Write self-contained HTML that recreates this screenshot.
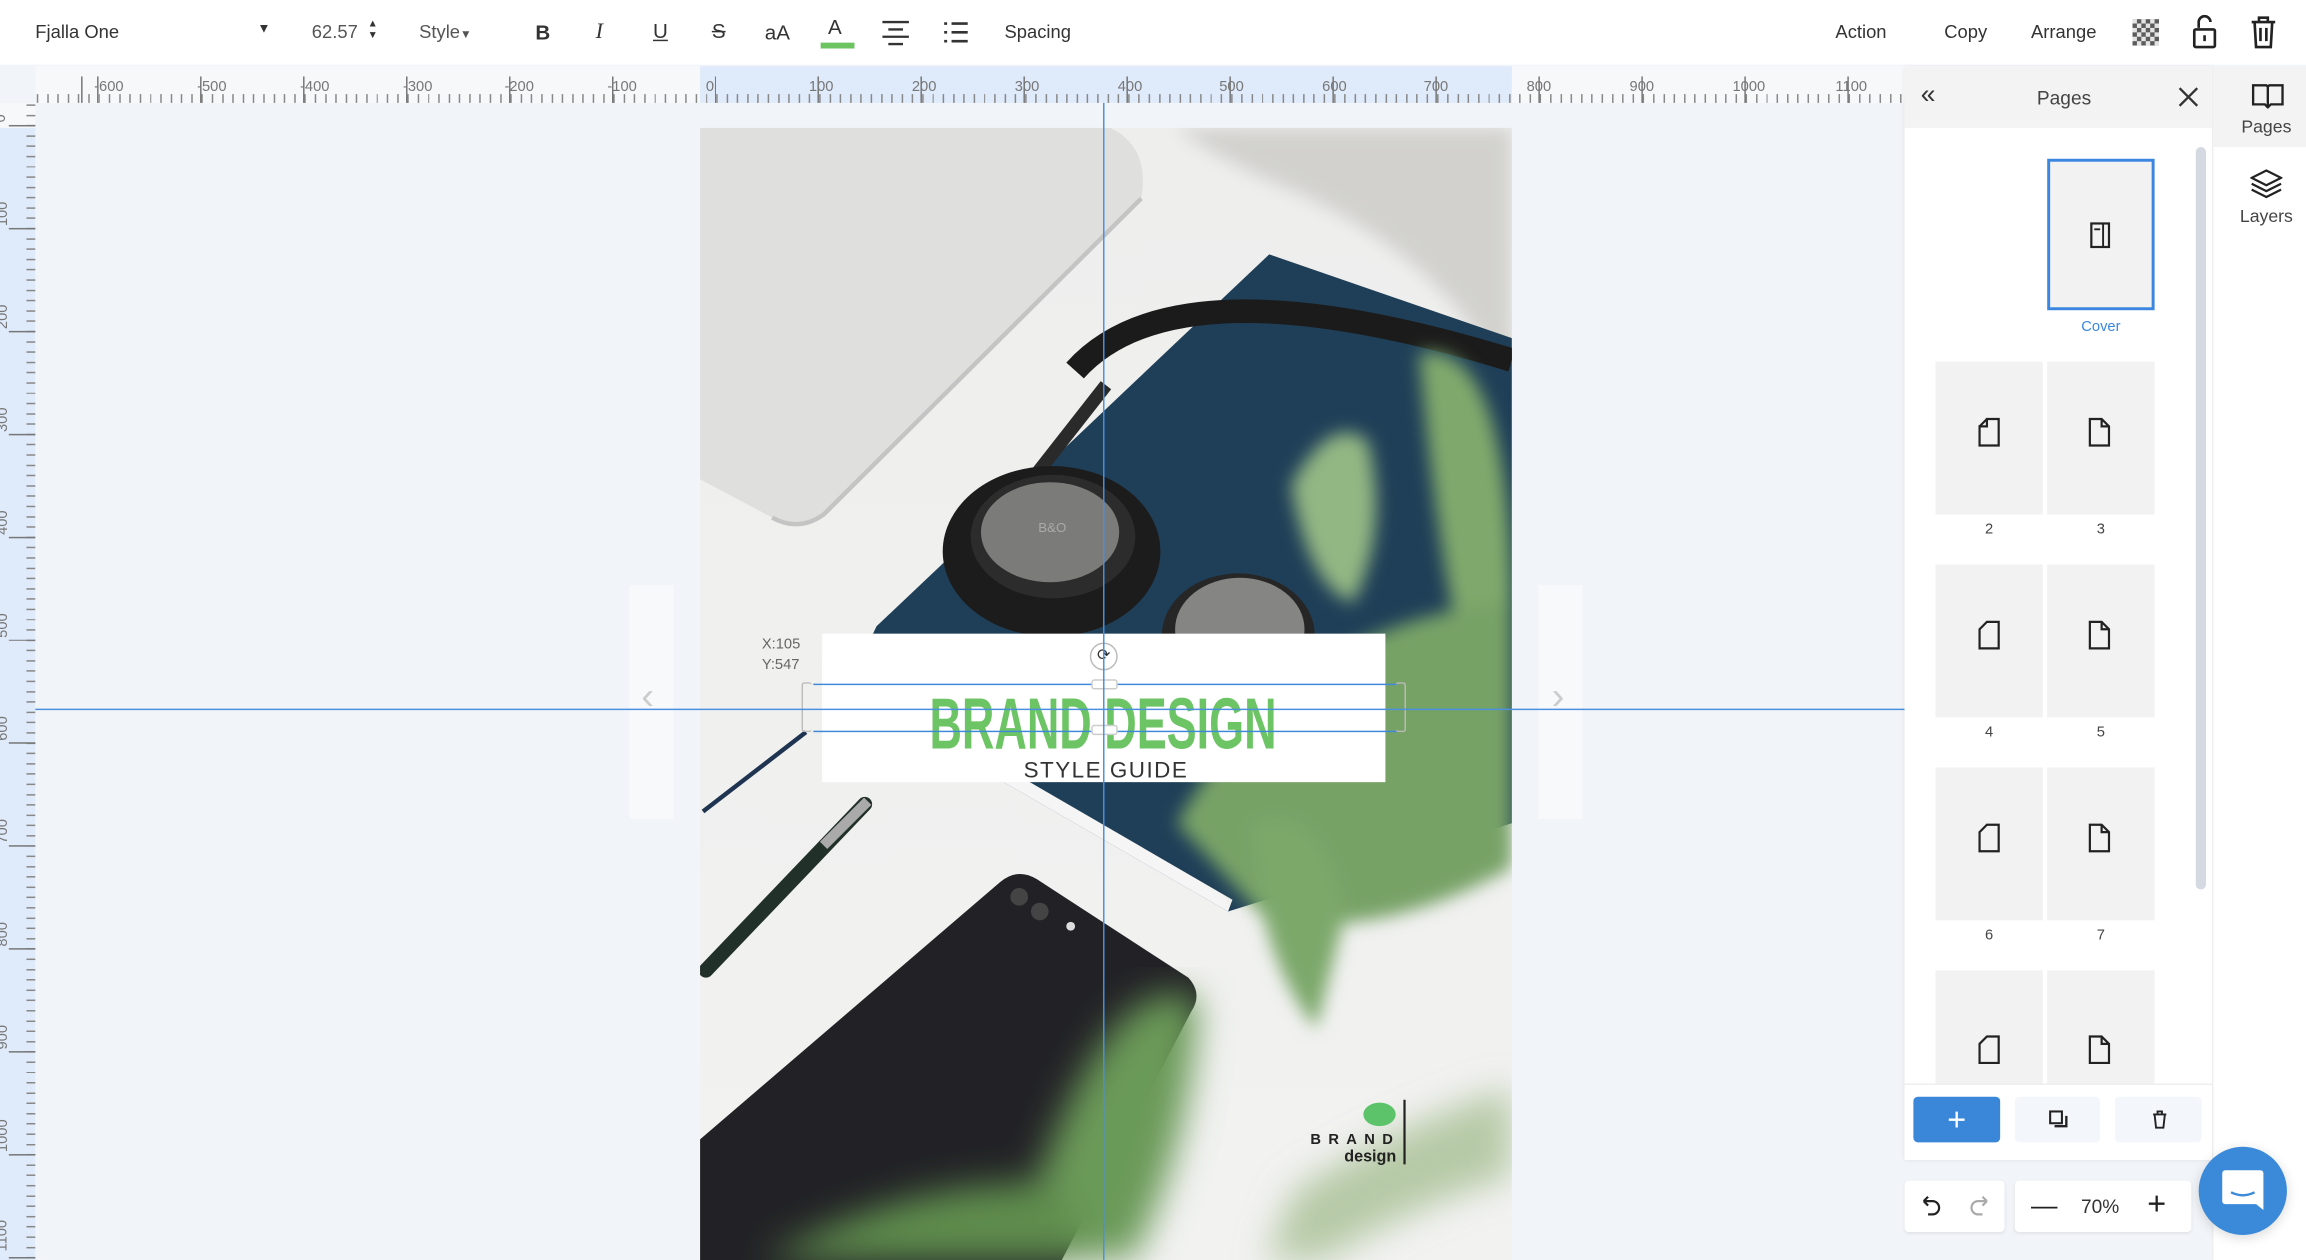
<!DOCTYPE html>
<html><head><meta charset="utf-8">
<style>
html,body{margin:0;padding:0;width:2306px;height:1260px;overflow:hidden;background:#f1f4f8;font-family:"Liberation Sans",sans-serif;}
#w{position:absolute;left:0;top:0;width:1568px;height:857px;transform:scale(1.4707,1.4702);transform-origin:0 0;background:#f1f4f8;overflow:hidden}
.a{position:absolute}
.tb{font-size:12.5px;color:#333;}
.thumb{position:absolute;width:73px;height:104px;background:#f2f2f2}
.lbl{position:absolute;font-size:10px;color:#444;width:73px;text-align:center}
</style></head><body><div id="w">
<!-- toolbar -->
<div class="a" style="left:0;top:0;width:1568px;height:44px;background:#fff"></div>
<div class="a tb" style="left:24px;top:15px">Fjalla One</div>
<div class="a tb" style="left:175px;top:14px;font-size:9px">▼</div>
<div class="a tb" style="left:212px;top:15px;color:#555">62.57</div>
<div class="a tb" style="left:250px;top:13px;font-size:7px;line-height:8px">▲<br>▼</div>
<div class="a tb" style="left:285px;top:15px;color:#555">Style<span style="font-size:8px">▼</span></div>
<div class="a tb" style="left:364px;top:14px;font-weight:bold;font-size:14px">B</div>
<div class="a tb" style="left:405px;top:14px;font-style:italic;font-family:'Liberation Serif',serif;font-size:15px">I</div>
<div class="a tb" style="left:444px;top:13px;text-decoration:underline;font-size:14px">U</div>
<div class="a tb" style="left:484px;top:13px;text-decoration:line-through;font-size:14px">S</div>
<div class="a tb" style="left:520px;top:14px;font-size:14px">aA</div>
<div class="a tb" style="left:563px;top:10px;font-size:14px">A</div>
<div class="a" style="left:558px;top:29px;width:23px;height:4px;background:#6cc461"></div>
<svg class="a" style="left:599px;top:13px" width="20" height="18"><path d="M1 2h18M5 7h10M1 12h18M5 17h10" stroke="#333" stroke-width="1.6"/></svg>
<svg class="a" style="left:641px;top:14px" width="18" height="16"><path d="M1 2h2M1 8h2M1 14h2M6 2h11M6 8h11M6 14h11" stroke="#333" stroke-width="1.8"/></svg>
<div class="a tb" style="left:683px;top:15px">Spacing</div>
<div class="a tb" style="left:1248px;top:15px">Action</div>
<div class="a tb" style="left:1322px;top:15px">Copy</div>
<div class="a tb" style="left:1381px;top:15px">Arrange</div>
<div class="a" style="left:1450px;top:13px;width:18px;height:18px;background:repeating-conic-gradient(#333 0 25%,#ddd 0 50%) 0 0/6px 6px;opacity:.8"></div>
<svg class="a" style="left:1490px;top:10px" width="18" height="24"><path d="M5 9V5a4 4 0 0 1 8 0" fill="none" stroke="#222" stroke-width="1.8"/><rect x="2" y="10" width="14" height="12" rx="1" fill="none" stroke="#222" stroke-width="1.8"/><path d="M9 14v4" stroke="#222" stroke-width="1.8"/></svg>
<svg class="a" style="left:1530px;top:10px" width="18" height="24"><path d="M1 5h16M6 5V2h6v3M3 5l1 17h10l1-17M7 9v9M11 9v9" fill="none" stroke="#222" stroke-width="1.8"/></svg>

<!-- horizontal ruler -->
<div class="a" style="left:24px;top:45px;width:1271px;height:25px;background:#f7f8fa"></div>
<div class="a" style="left:476px;top:45px;width:552px;height:25px;background:#dfeafa"></div>
<div class="a" style="left:24px;top:64px;width:1271px;height:6px;background:repeating-linear-gradient(90deg,#888 0 1px,transparent 1px 7px);background-position:1px 0"></div>
<div class="a" style="left:24px;top:52px;width:1271px;height:18px;background:repeating-linear-gradient(90deg,#777 0 1px,transparent 1px 70px);background-position:42px 0"></div>
<div class="a" style="left:0;top:54px;width:1295px;height:12px;font-size:10px;color:#777">
<span class="a" style="left:64px">-600</span><span class="a" style="left:134px">-500</span><span class="a" style="left:204px">-400</span><span class="a" style="left:274px">-300</span><span class="a" style="left:343px">-200</span><span class="a" style="left:413px">-100</span><span class="a" style="left:480px">0</span><span class="a" style="left:550px">100</span><span class="a" style="left:620px">200</span><span class="a" style="left:690px">300</span><span class="a" style="left:760px">400</span><span class="a" style="left:829px">500</span><span class="a" style="left:899px">600</span><span class="a" style="left:968px">700</span><span class="a" style="left:1038px">800</span><span class="a" style="left:1108px">900</span><span class="a" style="left:1178px">1000</span><span class="a" style="left:1248px">1100</span></div>
<!-- vertical ruler -->
<div class="a" style="left:0;top:70px;width:24px;height:787px;background:#f7f8fa"></div>
<div class="a" style="left:0;top:87px;width:24px;height:770px;background:#dfeafa"></div>
<div class="a" style="left:18px;top:70px;width:6px;height:787px;background:repeating-linear-gradient(180deg,#888 0 1px,transparent 1px 7px);background-position:0 1px"></div>
<div class="a" style="left:6px;top:70px;width:18px;height:787px;background:repeating-linear-gradient(180deg,#777 0 1px,transparent 1px 70px);background-position:0 15px"></div>
<div class="a" style="left:0;top:0;font-size:10px;color:#777">
<span class="a" style="left:-2px;top:75px;transform:rotate(-90deg)">0</span><span class="a" style="left:-6px;top:140px;transform:rotate(-90deg)">100</span><span class="a" style="left:-6px;top:210px;transform:rotate(-90deg)">200</span><span class="a" style="left:-6px;top:280px;transform:rotate(-90deg)">300</span><span class="a" style="left:-6px;top:350px;transform:rotate(-90deg)">400</span><span class="a" style="left:-6px;top:420px;transform:rotate(-90deg)">500</span><span class="a" style="left:-6px;top:490px;transform:rotate(-90deg)">600</span><span class="a" style="left:-6px;top:560px;transform:rotate(-90deg)">700</span><span class="a" style="left:-6px;top:630px;transform:rotate(-90deg)">800</span><span class="a" style="left:-6px;top:700px;transform:rotate(-90deg)">900</span><span class="a" style="left:-9px;top:767px;transform:rotate(-90deg)">1000</span><span class="a" style="left:-9px;top:835px;transform:rotate(-90deg)">1100</span></div>

<!-- side arrow panels -->
<div class="a" style="left:428px;top:398px;width:30px;height:159px;background:#f8f9fb"></div>
<div class="a" style="left:436px;top:458px;font-size:26px;color:#ccc">‹</div>
<div class="a" style="left:1046px;top:398px;width:30px;height:159px;background:#f8f9fb"></div>
<div class="a" style="left:1055px;top:458px;font-size:26px;color:#ccc">›</div>

<!-- photo page -->
<svg class="a" style="left:476px;top:87px" width="552" height="770" viewBox="476 87 552 770">
<defs><filter id="b"><feGaussianBlur stdDeviation="6"/></filter><filter id="b3"><feGaussianBlur stdDeviation="12"/></filter>
<linearGradient id="bg" x1="0" y1="0" x2="0" y2="1"><stop offset="0" stop-color="#eeeeed"/><stop offset="1" stop-color="#f2f2f1"/></linearGradient></defs>
<rect x="476" y="87" width="552" height="770" fill="url(#bg)"/>
<path d="M800 87H1028V270Q990 180 880 130Q830 110 800 87Z" fill="#d2d1ce" filter="url(#b)"/>
<path d="M476 87H755Q782 100 776 135L560 350Q543 362 525 352L476 326Z" fill="#dfdfde"/>
<path d="M776 135L560 350Q543 362 525 352" fill="none" stroke="#c4c4c4" stroke-width="3"/>
<path d="M863 173L1028 230V560L835 620L575 470L596 426Z" fill="#1f3f58"/>
<path d="M575 470L835 620L838 612L590 468Z" fill="#f5f5f5"/>
<path d="M731 252Q800 175 1028 245" fill="none" stroke="#1b1b1b" stroke-width="16"/>
<path d="M752 262L705 322" stroke="#2a2a2a" stroke-width="9"/>
<ellipse cx="715" cy="375" rx="74" ry="58" fill="#1c1c1c"/>
<ellipse cx="716" cy="365" rx="56" ry="42" fill="#2c2c2c"/>
<ellipse cx="714" cy="362" rx="47" ry="34" fill="#7b7b7a"/>
<text x="706" y="362" font-size="9" fill="#aaa" font-family="Liberation Sans">B&amp;O</text>
<ellipse cx="842" cy="432" rx="52" ry="42" fill="#262626"/>
<ellipse cx="843" cy="428" rx="44" ry="35" fill="#858584"/>
<path d="M478 552L548 498" stroke="#1e3450" stroke-width="3"/>
<path d="M480 660L588 547" stroke="#22302a" stroke-width="10" stroke-linecap="round"/>
<path d="M560 575L590 545" stroke="#aaa" stroke-width="7"/>
<path d="M680 600Q692 590 705 598L808 665Q818 676 810 688L722 857H476V775Z" fill="#222226"/>
<circle cx="693" cy="610" r="6" fill="#444"/><circle cx="707" cy="620" r="6" fill="#444"/><circle cx="728" cy="630" r="3" fill="#ddd"/>
<g filter="url(#b)">
<path d="M878 330Q905 280 930 300Q945 360 920 410Q890 400 878 330Z" fill="#93b783"/>
<path d="M965 240Q1028 230 1028 420V540Q985 470 965 240Z" fill="#7fa96c"/>
<path d="M800 560Q880 420 1028 410V590Q940 640 860 625Z" fill="#77a266"/>
<path d="M850 560Q900 540 915 620L895 700Q855 650 850 560Z" fill="#7ba86a"/>
</g>
<g filter="url(#b3)">
<path d="M690 850Q750 650 815 680Q810 780 770 857Z" fill="#6a9a58"/>
<path d="M520 857Q620 800 720 805L740 857Z" fill="#5f8d4e"/>
<path d="M880 810Q960 760 1028 740V800Q960 820 900 857H860Z" fill="#9cb886" opacity=".7"/>
</g>
<ellipse cx="938" cy="758" rx="11" ry="8" fill="#5cc36a"/>
<path d="M955 748V792" stroke="#222" stroke-width="1.5"/>
<text x="891" y="778" font-size="10" font-weight="bold" letter-spacing="5" fill="#222" font-family="Liberation Sans">BRAND</text>
<text x="914" y="790" font-size="11" font-weight="bold" fill="#222" font-family="Liberation Sans">design</text>
</svg>

<!-- text box -->
<div class="a" style="left:559px;top:431px;width:383px;height:101px;background:#fff"></div>
<svg class="a" style="left:559px;top:431px" width="383" height="101">
<text x="73" y="78" textLength="236" lengthAdjust="spacingAndGlyphs" font-family="Liberation Sans Narrow, Liberation Sans" font-weight="bold" font-size="49" fill="#6cc464">BRAND DESIGN</text>
<text x="137" y="98" textLength="112" lengthAdjust="spacingAndGlyphs" font-family="Liberation Sans" font-size="15" letter-spacing="1" fill="#333">STYLE GUIDE</text>
</svg>
<div class="a" style="left:518px;top:432px;font-size:10px;color:#666;line-height:14px">X:105<br>Y:547</div>
<!-- selection -->
<div class="a" style="left:553px;top:465px;width:397px;height:31px;border-top:1.5px solid #3f87d8;border-bottom:1.5px solid #3f87d8"></div>
<div class="a" style="left:545px;top:464px;width:6px;height:32px;border:1.5px solid #bbb;border-right:none;border-radius:2px;background:transparent"></div>
<div class="a" style="left:949px;top:464px;width:6px;height:32px;border:1.5px solid #bbb;border-left:none;border-radius:2px"></div>
<div class="a" style="left:742px;top:462px;width:16px;height:5px;background:#fff;border:1px solid #ccc;border-radius:2px"></div>
<div class="a" style="left:742px;top:493px;width:16px;height:5px;background:#fff;border:1px solid #ccc;border-radius:2px"></div>
<div class="a" style="left:741px;top:437px;width:17px;height:17px;border-radius:50%;background:#fff;border:1px solid #bbb;font-size:11px;text-align:center;line-height:17px;color:#333">⟳</div>
<!-- guides -->
<div class="a" style="left:750px;top:70px;width:1px;height:787px;background:#4a8fe0"></div>
<div class="a" style="left:24px;top:482px;width:1271px;height:1px;background:#4a8fe0"></div>

<!-- right panel -->
<div class="a" style="left:1295px;top:45px;width:209px;height:743px;background:#fff;box-shadow:0 1px 3px rgba(0,0,0,.08)"></div>
<div class="a" style="left:1295px;top:45px;width:209px;height:42px;background:#f3f3f3"></div>
<div class="a" style="left:1306px;top:54px;font-size:18px;color:#333">«</div>
<div class="a" style="left:1385px;top:59px;font-size:13px;color:#444">Pages</div>
<svg class="a" style="left:1481px;top:59px" width="14" height="14"><path d="M1 1L13 13M13 1L1 13" stroke="#333" stroke-width="1.6"/></svg>
<div class="a" style="left:1493px;top:100px;width:7px;height:505px;background:#d5d9e1;border-radius:4px"></div>
<div class="thumb" style="left:1392px;top:108px;width:69px;height:99px;border:2px solid #3b86e0"></div>
<svg class="a" style="left:1421px;top:151px" width="14" height="18"><rect x="1" y="1" width="12" height="16" fill="none" stroke="#222" stroke-width="1.5"/><path d="M9 1V17M3 5h4" stroke="#222" stroke-width="1.3"/></svg>
<div class="lbl" style="left:1392px;top:217px;color:#3b86e0">Cover</div>
<div class="thumb" style="left:1316px;top:246px"></div><div class="thumb" style="left:1392px;top:246px"></div>
<div class="thumb" style="left:1316px;top:384px"></div><div class="thumb" style="left:1392px;top:384px"></div>
<div class="thumb" style="left:1316px;top:522px"></div><div class="thumb" style="left:1392px;top:522px"></div>
<div class="thumb" style="left:1316px;top:660px;height:77px"></div><div class="thumb" style="left:1392px;top:660px;height:77px"></div>
<svg class="a" style="left:1316px;top:246px" width="150" height="490">
<g fill="none" stroke="#222" stroke-width="1.5">
<path d="M30 44h5v-5h8v18h-13z M30 44l5-5"/>
<path d="M105 39h8l5 5v13h-13z M113 39v5h5"/>
<path d="M30 182l5-5h8v18h-13z"/><path d="M105 177h8l5 5v13h-13z M113 177v5h5"/>
<path d="M30 320l5-5h8v18h-13z"/><path d="M105 315h8l5 5v13h-13z M113 315v5h5"/>
<path d="M30 464l5-5h8v18h-13z"/><path d="M105 459h8l5 5v13h-13z M113 459v5h5"/>
</g></svg>
<div class="lbl" style="left:1316px;top:355px">2</div><div class="lbl" style="left:1392px;top:355px">3</div>
<div class="lbl" style="left:1316px;top:493px">4</div><div class="lbl" style="left:1392px;top:493px">5</div>
<div class="lbl" style="left:1316px;top:631px">6</div><div class="lbl" style="left:1392px;top:631px">7</div>
<div class="a" style="left:1295px;top:737px;width:209px;height:51px;background:#fff;border-top:1px solid #eee"></div>
<div class="a" style="left:1301px;top:746px;width:59px;height:31px;background:#3a87d9;border-radius:3px;color:#fff;font-size:22px;text-align:center;line-height:31px">+</div>
<div class="a" style="left:1370px;top:746px;width:58px;height:31px;background:#f3f7fc;border-radius:3px"></div>
<svg class="a" style="left:1393px;top:755px" width="13" height="13"><rect x="1" y="1" width="8" height="8" fill="none" stroke="#222" stroke-width="1.4"/><path d="M4 11h8V4" fill="none" stroke="#222" stroke-width="1.6"/></svg>
<div class="a" style="left:1438px;top:746px;width:59px;height:31px;background:#f3f7fc;border-radius:3px"></div>
<svg class="a" style="left:1463px;top:755px" width="11" height="13"><path d="M1 3h9M4 3V1h3v2M2 3l1 9h5l1-9" fill="none" stroke="#222" stroke-width="1.3"/></svg>
<!-- undo/zoom -->
<div class="a" style="left:1295px;top:803px;width:68px;height:35px;background:#fff;border-radius:3px;box-shadow:0 1px 2px rgba(0,0,0,.08)"></div>
<svg class="a" style="left:1305px;top:812px" width="50" height="17"><path d="M3 5h6a4.5 4.5 0 0 1 0 9H6M3 5l3-3M3 5l3 3" fill="none" stroke="#222" stroke-width="1.5"/><path d="M46 5h-6a4.5 4.5 0 0 0 0 9h3M46 5l-3-3M46 5l-3 3" fill="none" stroke="#aaa" stroke-width="1.5"/></svg>
<div class="a" style="left:1370px;top:803px;width:120px;height:35px;background:#fff;border-radius:3px;box-shadow:0 1px 2px rgba(0,0,0,.08)"></div>
<div class="a" style="left:1381px;top:810px;font-size:18px;color:#222">—</div>
<div class="a" style="left:1415px;top:813px;font-size:13px;color:#333">70%</div>
<div class="a" style="left:1460px;top:806px;font-size:22px;color:#222">+</div>
<!-- side tabs -->
<div class="a" style="left:1504px;top:45px;width:64px;height:812px;background:#fff;border-left:1px solid #eee"></div>
<div class="a" style="left:1505px;top:45px;width:63px;height:55px;background:#f3f3f3"></div>
<svg class="a" style="left:1531px;top:56px" width="22" height="18"><path d="M1 2h9l1 1 1-1h9v13h-8l-2 2-2-2H1z M11 3v13" fill="none" stroke="#222" stroke-width="1.6"/></svg>
<div class="a" style="left:1524px;top:79px;font-size:12px;color:#444">Pages</div>
<svg class="a" style="left:1530px;top:115px" width="22" height="20"><path d="M11 1L21 6 11 11 1 6Z M1 10l10 5 10-5 M1 14l10 5 10-5" fill="none" stroke="#222" stroke-width="1.5"/></svg>
<div class="a" style="left:1523px;top:140px;font-size:12px;color:#444">Layers</div>
<!-- chat -->
<div class="a" style="left:1495px;top:780px;width:60px;height:60px;border-radius:50%;background:#3a8ad9;box-shadow:0 2px 8px rgba(0,0,0,.15)"></div>
<svg class="a" style="left:1509px;top:794px" width="32" height="32"><path d="M4 2h24a2 2 0 0 1 2 2v25l-5-4H4a2 2 0 0 1-2-2V4a2 2 0 0 1 2-2z" fill="#fff"/><path d="M8 17q8 4 16 0" fill="none" stroke="#3a8ad9" stroke-width="1.6"/></svg>
</div></body></html>
